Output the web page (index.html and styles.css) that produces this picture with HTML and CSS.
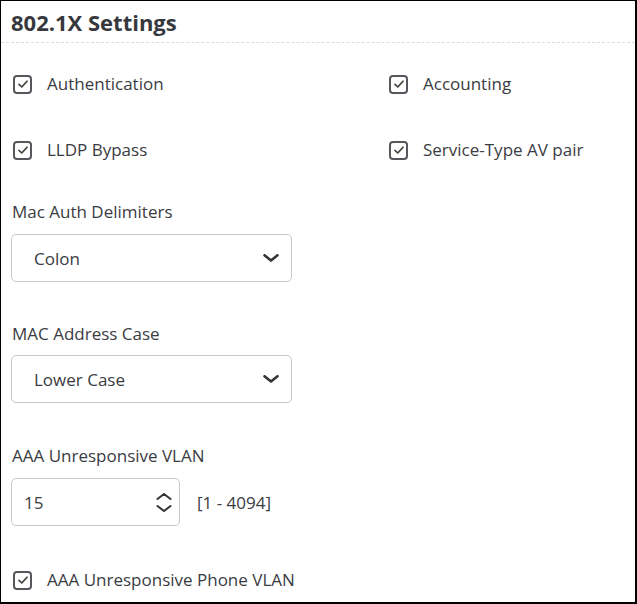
FILE: index.html
```html
<!DOCTYPE html>
<html>
<head>
<meta charset="utf-8">
<link rel="stylesheet" href="styles.css">
</head>
<body>
<div class="panel">
  <div class="header"><h2 class="title">802.1X Settings</h2></div>
  <div class="content">
    <div class="check-grid">
      <label class="check"><span class="box"><svg viewBox="0 0 12 12" width="12" height="12"><path d="M2 6.3 L4.8 9 L10 3.2" fill="none" stroke="#444" stroke-width="1.7" stroke-linecap="round" stroke-linejoin="round"/></svg></span><span>Authentication</span></label>
      <label class="check"><span class="box"><svg viewBox="0 0 12 12" width="12" height="12"><path d="M2 6.3 L4.8 9 L10 3.2" fill="none" stroke="#444" stroke-width="1.7" stroke-linecap="round" stroke-linejoin="round"/></svg></span><span>Accounting</span></label>
      <label class="check"><span class="box"><svg viewBox="0 0 12 12" width="12" height="12"><path d="M2 6.3 L4.8 9 L10 3.2" fill="none" stroke="#444" stroke-width="1.7" stroke-linecap="round" stroke-linejoin="round"/></svg></span><span>LLDP Bypass</span></label>
      <label class="check"><span class="box"><svg viewBox="0 0 12 12" width="12" height="12"><path d="M2 6.3 L4.8 9 L10 3.2" fill="none" stroke="#444" stroke-width="1.7" stroke-linecap="round" stroke-linejoin="round"/></svg></span><span>Service-Type AV pair</span></label>
    </div>

    <div class="field first">
      <div class="field-label">Mac Auth Delimiters</div>
      <div class="select"><span>Colon</span><svg class="chev" viewBox="0 0 16 8" width="16" height="8"><path d="M1.5 1.3 L8 6.5 L14.5 1.3" fill="none" stroke="#333" stroke-width="2.6" stroke-linecap="round" stroke-linejoin="round"/></svg></div>
    </div>

    <div class="field second">
      <div class="field-label">MAC Address Case</div>
      <div class="select"><span>Lower Case</span><svg class="chev" viewBox="0 0 16 8" width="16" height="8"><path d="M1.5 1.3 L8 6.5 L14.5 1.3" fill="none" stroke="#333" stroke-width="2.6" stroke-linecap="round" stroke-linejoin="round"/></svg></div>
    </div>

    <div class="field third">
      <div class="field-label">AAA Unresponsive VLAN</div>
      <div class="num-row">
        <div class="number"><span>15</span>
          <span class="spin">
            <svg viewBox="0 0 16 7" width="16" height="7"><path d="M1.5 6 L8 1 L14.5 6" fill="none" stroke="#333" stroke-width="2" stroke-linecap="round" stroke-linejoin="round"/></svg>
            <svg viewBox="0 0 16 7" width="16" height="7"><path d="M1.5 1 L8 6 L14.5 1" fill="none" stroke="#333" stroke-width="2" stroke-linecap="round" stroke-linejoin="round"/></svg>
          </span>
        </div>
        <span class="range">[1 - 4094]</span>
      </div>
    </div>

    <label class="check last"><span class="box"><svg viewBox="0 0 12 12" width="12" height="12"><path d="M2 6.3 L4.8 9 L10 3.2" fill="none" stroke="#444" stroke-width="1.7" stroke-linecap="round" stroke-linejoin="round"/></svg></span><span>AAA Unresponsive Phone VLAN</span></label>
  </div>
</div>
</body>
</html>
```

FILE: styles.css
```css
html, body {
  margin: 0;
  padding: 0;
  background: #fff;
}
body {
  font-family: "Open Sans", "Noto Sans", sans-serif;
  color: #3a3c42;
  font-size: 17px;
}
.panel {
  box-sizing: border-box;
  width: 637px;
  height: 604px;
  border-left: 1px solid #000;
  border-top: 1px solid #000;
  border-right: 2px solid #000;
  border-bottom: 2px solid #000;
  overflow: hidden;
}
.header {
  padding: 6px 10px 5px;
  border-bottom: 1px dashed #dcdcdc;
}
.title {
  margin: 0;
  font-size: 22px;
  line-height: 30px;
  font-weight: 700;
  color: #36383e;
}
.content {
  padding: 0 10px;
}
.check-grid {
  display: grid;
  grid-template-columns: 376px 1fr;
  row-gap: 42px;
  padding-top: 29px;
}
.check {
  display: flex;
  align-items: center;
  height: 24px;
  line-height: 24px;
}
.box {
  box-sizing: border-box;
  width: 19px;
  height: 19px;
  border: 2px solid #55575c;
  border-radius: 4px;
  margin-left: 2px;
  margin-right: 15px;
  display: flex;
  align-items: center;
  justify-content: center;
}
.box svg {
  display: block;
}
.field-label {
  line-height: 24px;
  padding-left: 1px;
}
.field.first {
  margin-top: 38px;
}
.field.second {
  margin-top: 40px;
}
.field.third {
  margin-top: 41px;
}
.select,
.number {
  box-sizing: border-box;
  height: 48px;
  border: 1px solid #c8c8c8;
  border-radius: 5px;
  margin-top: 9px;
  display: flex;
  align-items: center;
}
.field.first .select,
.field.third .number {
  margin-top: 10px;
}
.select {
  width: 281px;
  padding: 0 12px 0 22px;
  justify-content: space-between;
}
.chev {
  display: block;
}
.num-row {
  display: flex;
  align-items: center;
}
.number {
  width: 169px;
  padding: 0 7px 0 12px;
  justify-content: space-between;
}
.spin {
  display: flex;
  flex-direction: column;
  gap: 5px;
}
.spin svg {
  display: block;
}
.range {
  margin-left: 17px;
  margin-top: 10px;
}
.check.last {
  margin-top: 42px;
}
```
